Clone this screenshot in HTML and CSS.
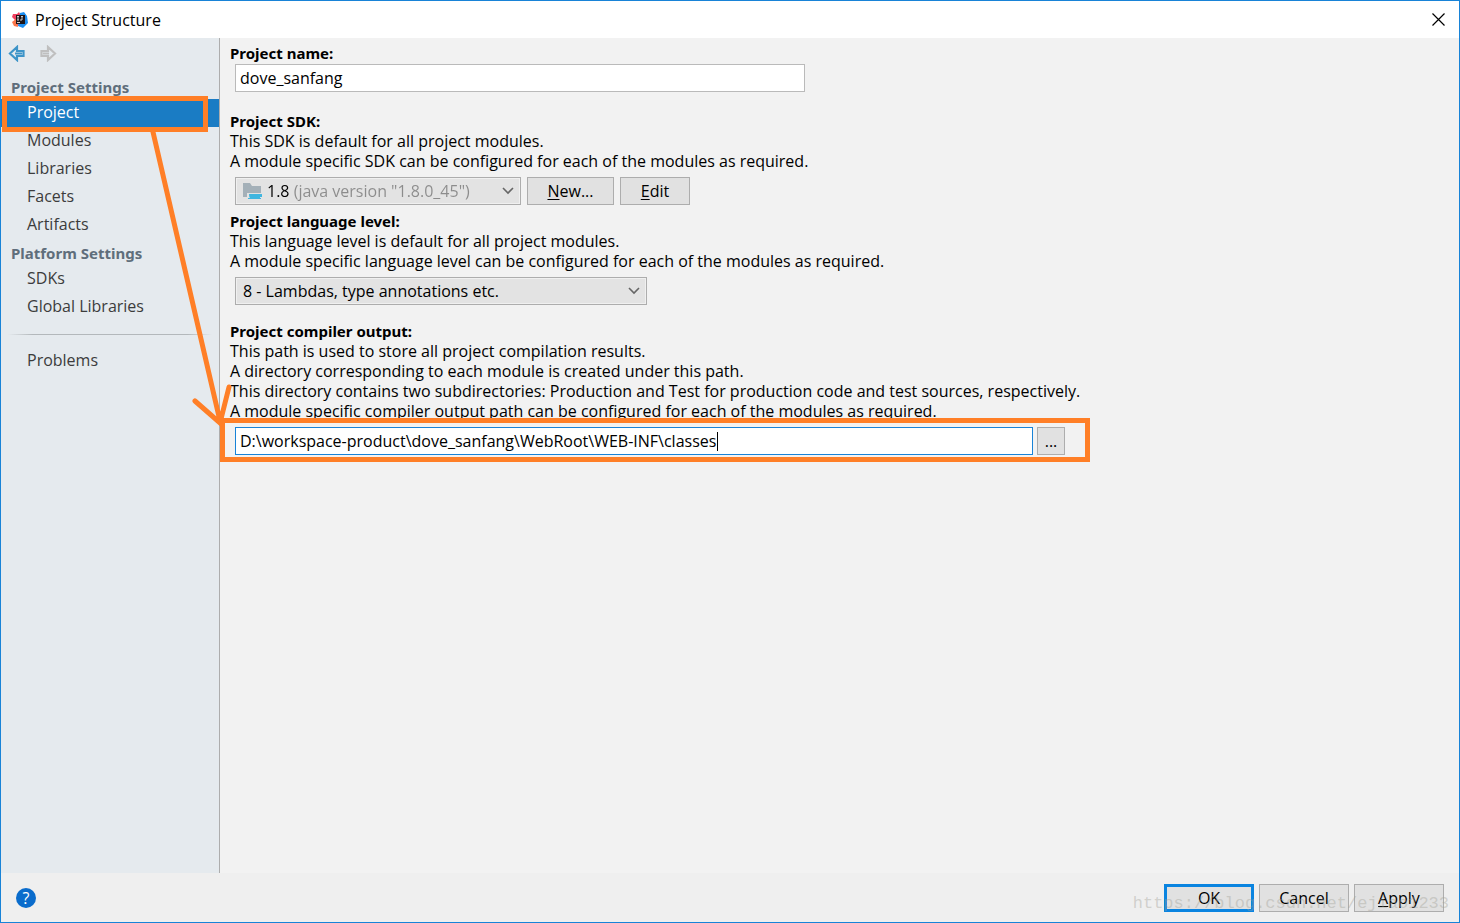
FILE: index.html
```html
<!DOCTYPE html>
<html lang="en">
  <head>
    <meta charset="UTF-8" />
    <meta name="viewport" content="width=device-width, initial-scale=1.0" />
    <title>Project Structure</title>
    <link rel="stylesheet" href="styles.css">
  </head>
  <body>
    <div class="window">
      <header class="titlebar">
        <svg class="app-icon" width="16" height="16" viewBox="0 0 16 16">
          <path d="M1 2 L5 2 L7 0 L9 4 L6 14 L1 11 L3 8 L0 5 Z" fill="#f0405f"/>
          <path d="M0 10 L4 7 L6 15 L2 14 Z" fill="#f9764a"/>
          <path d="M8 1 L12 0 L15 4 L16 11 L11 16 L6 14 Z" fill="#1a8cf0"/>
          <rect x="4" y="3" width="9" height="9" fill="#1c1418"/>
          <path d="M5 4.5h2M6 5v3M5 8h2M9 4.500h2M10 5v3H8M5 10.500h3" stroke="#ccc" fill="none"/>
        </svg>
        <h1 class="title">Project Structure</h1>
        <button class="close" aria-label="Close">
          <svg width="13" height="13" viewBox="0 0 13 13"><path d="M0.5 0.5 L12.5 12.5 M12.5 0.5 L0.5 12.5" stroke="#000" stroke-width="1.2"/></svg>
        </button>
      </header>

      <div class="content">
        <aside class="sidebar">
          <div class="history">
            <button class="history-btn back" aria-label="Back">
              <svg width="17" height="17" viewBox="0 0 17 17"><path d="M9 2 L2 8.500 L9 15 V11 H15.500 V6 H9 Z M14 8.500 H7" fill="none" stroke="currentColor" stroke-width="2.200"/></svg>
            </button>
            <button class="history-btn forward" aria-label="Forward" disabled>
              <svg width="17" height="17" viewBox="0 0 17 17"><path d="M8 2 L15 8.500 L8 15 V11 H1.500 V6 H8 Z M3 8.500 H9" fill="none" stroke="currentColor" stroke-width="2.200"/></svg>
            </button>
          </div>
          <nav>
            <h2 class="nav-title">Project Settings</h2>
            <a href="#" class="nav-item active">Project</a>
            <a href="#" class="nav-item">Modules</a>
            <a href="#" class="nav-item">Libraries</a>
            <a href="#" class="nav-item">Facets</a>
            <a href="#" class="nav-item">Artifacts</a>
            <h2 class="nav-title">Platform Settings</h2>
            <a href="#" class="nav-item">SDKs</a>
            <a href="#" class="nav-item">Global Libraries</a>
            <hr class="nav-line">
            <a href="#" class="nav-item">Problems</a>
          </nav>
        </aside>

        <main class="main">
          <section class="group">
            <label class="group-title" for="name">Project name:</label>
            <div class="controls">
              <input class="text name-input" id="name" type="text" value="dove_sanfang">
            </div>
          </section>

          <section class="group">
            <label class="group-title" for="sdk">Project SDK:</label>
            <p>This SDK is default for all project modules.</p>
            <p>A module specific SDK can be configured for each of the modules as required.</p>
            <div class="controls sdk-controls">
              <div class="combo sdk-combo">
                <svg class="folder" width="20" height="18" viewBox="0 0 20 18">
                  <path d="M0 1 H7 L9 4 H18 V15 H0 Z" fill="#a4b0b8"/>
                  <path d="M4 11 H20 V18 H4 Z" fill="#e3e3e3"/>
                  <path d="M6 12 H19 V15 H17 V16 H7 Q6 15 6 12 Z M5 16 H18 V17 H5 Z" fill="#40b6e0"/>
                </svg>
                <select class="sdk-select" id="sdk">
                  <option>1.8 (java version "1.8.0_45")</option>
                </select>
                <svg class="chevron" width="12" height="8" viewBox="0 0 12 8"><path d="M1 1 L6 6 L11 1" fill="none" stroke="#666" stroke-width="1.600"/></svg>
              </div>
              <button class="btn btn-new"><u>N</u>ew...</button>
              <button class="btn btn-edit"><u>E</u>dit</button>
            </div>
          </section>

          <section class="group">
            <label class="group-title" for="level">Project language level:</label>
            <p>This language level is default for all project modules.</p>
            <p>A module specific language level can be configured for each of the modules as required.</p>
            <div class="controls">
              <div class="combo level-combo">
                <select id="level">
                  <option>8 - Lambdas, type annotations etc.</option>
                </select>
                <svg class="chevron" width="12" height="8" viewBox="0 0 12 8"><path d="M1 1 L6 6 L11 1" fill="none" stroke="#666" stroke-width="1.600"/></svg>
              </div>
            </div>
          </section>

          <section class="group">
            <label class="group-title" for="output">Project compiler output:</label>
            <p>This path is used to store all project compilation results.</p>
            <p>A directory corresponding to each module is created under this path.</p>
            <p>This directory contains two subdirectories: Production and Test for production code and test sources, respectively.</p>
            <p>A module specific compiler output path can be configured for each of the modules as required.</p>
            <div class="controls">
              <div class="output-field">
                <input class="text focused" id="output" type="text" value="D:\workspace-product\dove_sanfang\WebRoot\WEB-INF\classes">
                <span class="caret"></span>
              </div>
              <button class="btn btn-browse" aria-label="Browse">...</button>
            </div>
          </section>
        </main>
      </div>

      <footer class="footer">
        <button class="help" aria-label="Help">?</button>
        <div class="actions">
          <button class="btn btn-ok">OK</button>
          <button class="btn">Cancel</button>
          <button class="btn"><u>A</u>pply</button>
        </div>
        <span class="watermark">https://blog.csdn.net/ejiao1233</span>
      </footer>

      <svg class="marks" width="1100" height="470" viewBox="0 0 1100 470">
        <rect x="4.5" y="98.500" width="201" height="31"/>
        <rect x="222.500" y="420.500" width="865" height="39"/>
        <path d="M153 132 L220 421 M195 401 L220 423 L229 387"/>
      </svg>
    </div>
  </body>
</html>
```

FILE: styles.css
```css
* {
  margin: 0;
  padding: 0;
  box-sizing: border-box;
}

:root {
  --blue: #1883d7;
  --mark: #ff7f27;
  --line: #adadad;
}

body {
  font-family: "Open Sans", "Noto Sans", sans-serif;
  font-size: 16px;
  line-height: 20px;
  color: #000;
}

button,
input,
select {
  font: inherit;
  color: inherit;
}

.window {
  position: relative;
  display: flex;
  flex-direction: column;
  min-height: 100vh;
  border: 1px solid var(--blue);
  background: #f0f0f0;
}

/* Title bar */
.titlebar {
  display: flex;
  align-items: center;
  gap: 7px;
  height: 37px;
  padding: 0 14px 0 11px;
  background: #fff;
}

.title {
  flex: 1;
  font-size: 16px;
  font-weight: normal;
}

.close {
  display: flex;
  border: 0;
  background: none;
}

.content {
  flex: 1;
  display: flex;
}

/* Sidebar */
.sidebar {
  width: 219px;
  border-right: 1px solid var(--line);
  background: #e5eaee;
}

.history {
  display: flex;
  gap: 15px;
  height: 37px;
  padding: 7px;
}

.history-btn {
  display: flex;
  height: 17px;
  border: 0;
  background: none;
}

.back {
  color: #3d94c8;
}

.forward {
  color: #bfbfbf;
}

.nav-title {
  height: 24px;
  padding-left: 10px;
  font-family: "Noto Sans", sans-serif;
  font-size: 15px;
  line-height: 24px;
  color: #5f6e7b;
}

.nav-item {
  display: block;
  height: 28px;
  padding-left: 26px;
  line-height: 26px;
  color: #3c3c3c;
  text-decoration: none;
}

.nav-item.active {
  background: #1a7cc4;
  color: #fff;
}

.nav-item + .nav-title {
  height: 26px;
  line-height: 28px;
}

.nav-line {
  height: 1px;
  margin: 13px 7px 12px;
  border: 0;
  background: linear-gradient(90deg, transparent, #b3b8bb 12%, #b3b8bb 88%, transparent);
}

/* Settings form */
.main {
  flex: 1;
  padding: 5px 10px;
  background: #f2f2f2;
}

.group-title {
  display: block;
  font-family: "Noto Sans", sans-serif;
  font-size: 15px;
  font-weight: bold;
}

.controls {
  display: flex;
  gap: 4px;
  padding: 6px 5px;
}

.sdk-controls {
  gap: 6px;
}

.group:first-child .controls {
  padding: 1px 5px 19px;
}

.group:nth-child(3) .controls {
  padding-bottom: 16px;
}

.text {
  width: 100%;
  height: 28px;
  padding: 0 4px;
  border: 1px solid #bababa;
  outline: 0;
  background: #fff;
}

.name-input {
  width: 570px;
}

.text.focused {
  border-color: var(--blue);
}

.combo {
  display: flex;
  align-items: center;
  height: 28px;
  padding: 0 6px 0 7px;
  border: 1px solid var(--line);
  box-shadow: inset 0 0 0 1px #f0f0f0;
  background: #e3e3e3;
}

.combo select {
  flex: 1;
  min-width: 0;
  border: 0;
  outline: 0;
  appearance: none;
  background: none;
}

.folder {
  margin-right: 4px;
}

.sdk-combo {
  width: 286px;
}

/* Version in black, description in grey */
.combo .sdk-select {
  background: linear-gradient(90deg, #000 24px, #8c8c8c 24px);
  background-clip: text;
  color: transparent;
}

.sdk-select option {
  color: #000;
}

.level-combo {
  width: 412px;
}

.btn {
  width: 90px;
  height: 28px;
  border: 1px solid var(--line);
  background: #e1e1e1;
}

.btn u {
  text-underline-offset: 2px;
}

.btn-new {
  width: 87px;
}

.btn-edit {
  width: 70px;
}

.btn-browse {
  width: 28px;
}

.output-field {
  position: relative;
  width: 798px;
}

.caret {
  position: absolute;
  top: 5px;
  left: 482px;
  width: 1px;
  height: 19px;
  background: #000;
}

/* Footer */
.footer {
  position: relative;
  display: flex;
  align-items: center;
  justify-content: space-between;
  height: 49px;
  padding: 0 15px;
  background: #efefef;
}

.help {
  width: 20px;
  height: 20px;
  border: 0;
  border-radius: 50%;
  background: #0a6ccc;
  color: #fff;
}

.actions {
  display: flex;
  gap: 5px;
}

.btn-ok {
  border: 3px solid #0a84e0;
}

.watermark {
  position: absolute;
  right: 10px;
  bottom: 8px;
  font-family: "Liberation Mono", monospace;
  font-size: 17px;
  color: rgba(160, 160, 150, 0.4);
  pointer-events: none;
}

/* Highlight boxes and arrow */
.marks {
  position: absolute;
  top: -1px;
  left: -1px;
  fill: none;
  stroke: var(--mark);
  stroke-width: 5px;
  stroke-linecap: round;
  pointer-events: none;
}
```
